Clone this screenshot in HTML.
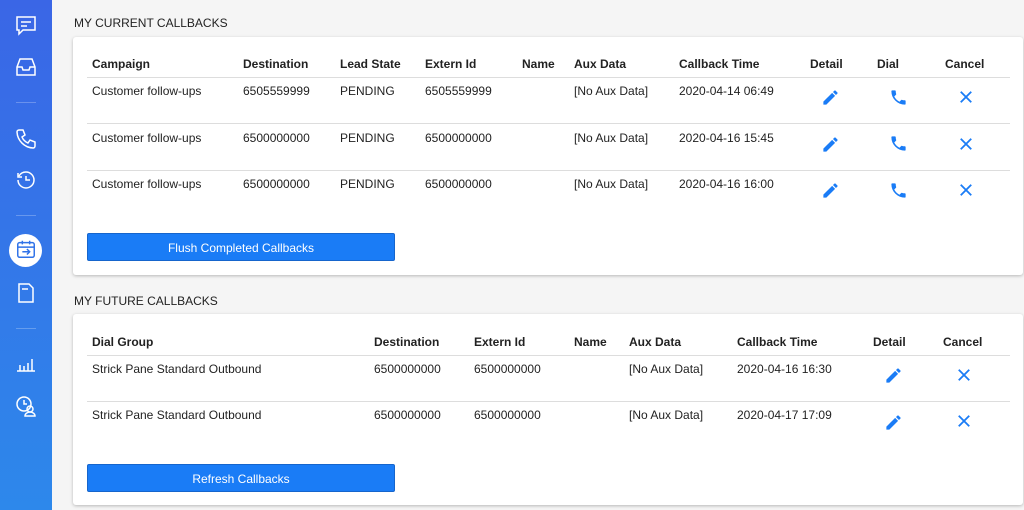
<!DOCTYPE html><html><head><style>
*{margin:0;padding:0;box-sizing:border-box}
body{width:1024px;height:510px;overflow:hidden;background:#f5f5f5;font-family:"Liberation Sans",Arial,sans-serif;position:relative;color:#222}
.sb{position:absolute;left:0;top:0;width:52px;height:510px;background:linear-gradient(#3a66e6,#2d88eb)}
.sb svg{position:absolute;left:14px}
.sep{position:absolute;left:16px;width:20px;height:1px;background:rgba(255,255,255,.25)}
.t{position:absolute;font-size:12px;white-space:nowrap}
.h{font-weight:bold}
.title{position:absolute;left:74px;font-size:12px;color:#222}
.card{position:absolute;left:73px;width:950px;background:#fff;border-radius:3px;box-shadow:0 1px 3px rgba(0,0,0,.25)}
.ln{position:absolute;left:87px;width:923px;height:1px;background:#ddd}
.btn{position:absolute;left:87px;width:308px;height:28px;background:#1a7cf6;border-radius:2px;color:#fff;font-size:12px;text-align:center;line-height:28px;border:1px solid #1665cc}
.ic{position:absolute}
</style></head><body>
<div class="sb">
<svg style="top:13px" width="24" height="24" viewBox="0 0 24 24" fill="none" stroke="#fff" stroke-width="1.5"><path d="M3 4h18v13H9l-4 4v-4H3z"/><path d="M7 9h10M7 13h6"/></svg>
<svg style="top:55px" width="24" height="24" viewBox="0 0 24 24" fill="none" stroke="#fff" stroke-width="1.5"><path d="M6 4h12l3 8v8H3v-8z"/><path d="M3 12h5l1 3h6l1-3h5"/></svg>
<div class="sep" style="top:102px"></div>
<svg style="top:127px" width="24" height="24" viewBox="0 0 24 24" fill="none" stroke="#fff" stroke-width="1.5"><path d="M5 3h4l2 5-3 2a11 11 0 006 6l2-3 5 2v4a2 2 0 01-2 2A17 17 0 013 5a2 2 0 012-2z"/></svg>
<svg style="top:168px" width="24" height="24" viewBox="0 0 24 24" fill="none" stroke="#fff" stroke-width="1.5"><path d="M4 12a8 8 0 108-8 8 8 0 00-7 4"/><path d="M4 5v4h4M12 8v4h4"/></svg>
<div class="sep" style="top:215px"></div>
<div style="position:absolute;left:9px;top:234px;width:33px;height:33px;border-radius:50%;background:#fff"></div>
<svg style="top:238px;left:15px" width="22" height="22" viewBox="0 0 24 24" fill="none" stroke="#2f72e8" stroke-width="1.6"><rect x="3" y="5" width="18" height="16" rx="2"/><path d="M3 10h18M8 3v4M16 3v4M8 15h8M13 12l3 3-3 3"/></svg>
<svg style="top:281px" width="24" height="24" viewBox="0 0 24 24" fill="none" stroke="#fff" stroke-width="1.5"><path d="M5 3h10l4 4v14H5z"/><path d="M8 8h6"/></svg>
<div class="sep" style="top:328px"></div>
<svg style="top:351px" width="24" height="24" viewBox="0 0 24 24" fill="none" stroke="#fff" stroke-width="1.5"><path d="M3 20h18M6 20v-6M10 20v-5M14 20v-8M18 20v-12"/></svg>
<svg style="top:394px" width="24" height="24" viewBox="0 0 24 24" fill="none" stroke="#fff" stroke-width="1.5"><circle cx="10" cy="10" r="7"/><path d="M10 6v4h3"/><circle cx="16" cy="15" r="3"/><path d="M11 22a5 4 0 0110 0z"/></svg>
</div>

<div class="title" style="top:16px">MY CURRENT CALLBACKS</div>
<div class="card" style="top:37px;height:238px"></div>
<div class="t h" style="left:92px;top:57px">Campaign</div><div class="t h" style="left:243px;top:57px">Destination</div><div class="t h" style="left:340px;top:57px">Lead State</div><div class="t h" style="left:425px;top:57px">Extern Id</div><div class="t h" style="left:522px;top:57px">Name</div><div class="t h" style="left:574px;top:57px">Aux Data</div><div class="t h" style="left:679px;top:57px">Callback Time</div><div class="t h" style="left:810px;top:57px">Detail</div><div class="t h" style="left:877px;top:57px">Dial</div><div class="t h" style="left:945px;top:57px">Cancel</div>
<div class="ln" style="top:77px"></div><div class="ln" style="top:123px"></div><div class="ln" style="top:170px"></div>

<div class="t" style="left:92px;top:84px">Customer follow-ups</div><div class="t" style="left:243px;top:84px">6505559999</div><div class="t" style="left:340px;top:84px">PENDING</div><div class="t" style="left:425px;top:84px">6505559999</div><div class="t" style="left:574px;top:84px">[No Aux Data]</div><div class="t" style="left:679px;top:84px">2020-04-14 06:49</div>
<div class="t" style="left:92px;top:131px">Customer follow-ups</div><div class="t" style="left:243px;top:131px">6500000000</div><div class="t" style="left:340px;top:131px">PENDING</div><div class="t" style="left:425px;top:131px">6500000000</div><div class="t" style="left:574px;top:131px">[No Aux Data]</div><div class="t" style="left:679px;top:131px">2020-04-16 15:45</div>
<div class="t" style="left:92px;top:177px">Customer follow-ups</div><div class="t" style="left:243px;top:177px">6500000000</div><div class="t" style="left:340px;top:177px">PENDING</div><div class="t" style="left:425px;top:177px">6500000000</div><div class="t" style="left:574px;top:177px">[No Aux Data]</div><div class="t" style="left:679px;top:177px">2020-04-16 16:00</div>

<svg width="0" height="0" style="position:absolute"><defs>
<symbol id="pen" viewBox="0 0 24 24"><path fill="#1a7cf6" d="M3 17.25V21h3.75L17.81 9.94l-3.75-3.75zM20.71 7.04a1 1 0 000-1.41l-2.34-2.34a1 1 0 00-1.41 0l-1.83 1.83 3.75 3.75z"/></symbol>
<symbol id="ph" viewBox="0 0 24 24"><path fill="#1a7cf6" d="M6.62 10.79a15.1 15.1 0 006.59 6.59l2.2-2.2a1 1 0 011.02-.24c1.12.37 2.33.57 3.57.57a1 1 0 011 1V20a1 1 0 01-1 1A17 17 0 013 4a1 1 0 011-1h3.5a1 1 0 011 1c0 1.25.2 2.45.57 3.57a1 1 0 01-.25 1.02z"/></symbol>
<symbol id="x" viewBox="0 0 24 24"><path stroke="#1a7cf6" stroke-width="2.4" d="M5 5l14 14M19 5L5 19"/></symbol>
</defs></svg>
<svg class="ic" style="left:821px;top:88px" width="19" height="19"><use href="#pen"/></svg><svg class="ic" style="left:889px;top:88px" width="19" height="19"><use href="#ph"/></svg><svg class="ic" style="left:957px;top:88px" width="18" height="18"><use href="#x"/></svg>
<svg class="ic" style="left:821px;top:135px" width="19" height="19"><use href="#pen"/></svg><svg class="ic" style="left:889px;top:134px" width="19" height="19"><use href="#ph"/></svg><svg class="ic" style="left:957px;top:135px" width="18" height="18"><use href="#x"/></svg>
<svg class="ic" style="left:821px;top:181px" width="19" height="19"><use href="#pen"/></svg><svg class="ic" style="left:889px;top:181px" width="19" height="19"><use href="#ph"/></svg><svg class="ic" style="left:957px;top:181px" width="18" height="18"><use href="#x"/></svg>
<div class="btn" style="top:233px">Flush Completed Callbacks</div>

<div class="title" style="top:294px">MY FUTURE CALLBACKS</div>
<div class="card" style="top:314px;height:191px"></div>
<div class="t h" style="left:92px;top:335px">Dial Group</div><div class="t h" style="left:374px;top:335px">Destination</div><div class="t h" style="left:474px;top:335px">Extern Id</div><div class="t h" style="left:574px;top:335px">Name</div><div class="t h" style="left:629px;top:335px">Aux Data</div><div class="t h" style="left:737px;top:335px">Callback Time</div><div class="t h" style="left:873px;top:335px">Detail</div><div class="t h" style="left:943px;top:335px">Cancel</div>
<div class="ln" style="top:355px"></div><div class="ln" style="top:401px"></div>
<div class="t" style="left:92px;top:362px">Strick Pane Standard Outbound</div><div class="t" style="left:374px;top:362px">6500000000</div><div class="t" style="left:474px;top:362px">6500000000</div><div class="t" style="left:629px;top:362px">[No Aux Data]</div><div class="t" style="left:737px;top:362px">2020-04-16 16:30</div>
<div class="t" style="left:92px;top:408px">Strick Pane Standard Outbound</div><div class="t" style="left:374px;top:408px">6500000000</div><div class="t" style="left:474px;top:408px">6500000000</div><div class="t" style="left:629px;top:408px">[No Aux Data]</div><div class="t" style="left:737px;top:408px">2020-04-17 17:09</div>
<svg class="ic" style="left:884px;top:366px" width="19" height="19"><use href="#pen"/></svg><svg class="ic" style="left:955px;top:366px" width="18" height="18"><use href="#x"/></svg>
<svg class="ic" style="left:884px;top:413px" width="19" height="19"><use href="#pen"/></svg><svg class="ic" style="left:955px;top:412px" width="18" height="18"><use href="#x"/></svg>
<div class="btn" style="top:464px">Refresh Callbacks</div>
</body></html>
